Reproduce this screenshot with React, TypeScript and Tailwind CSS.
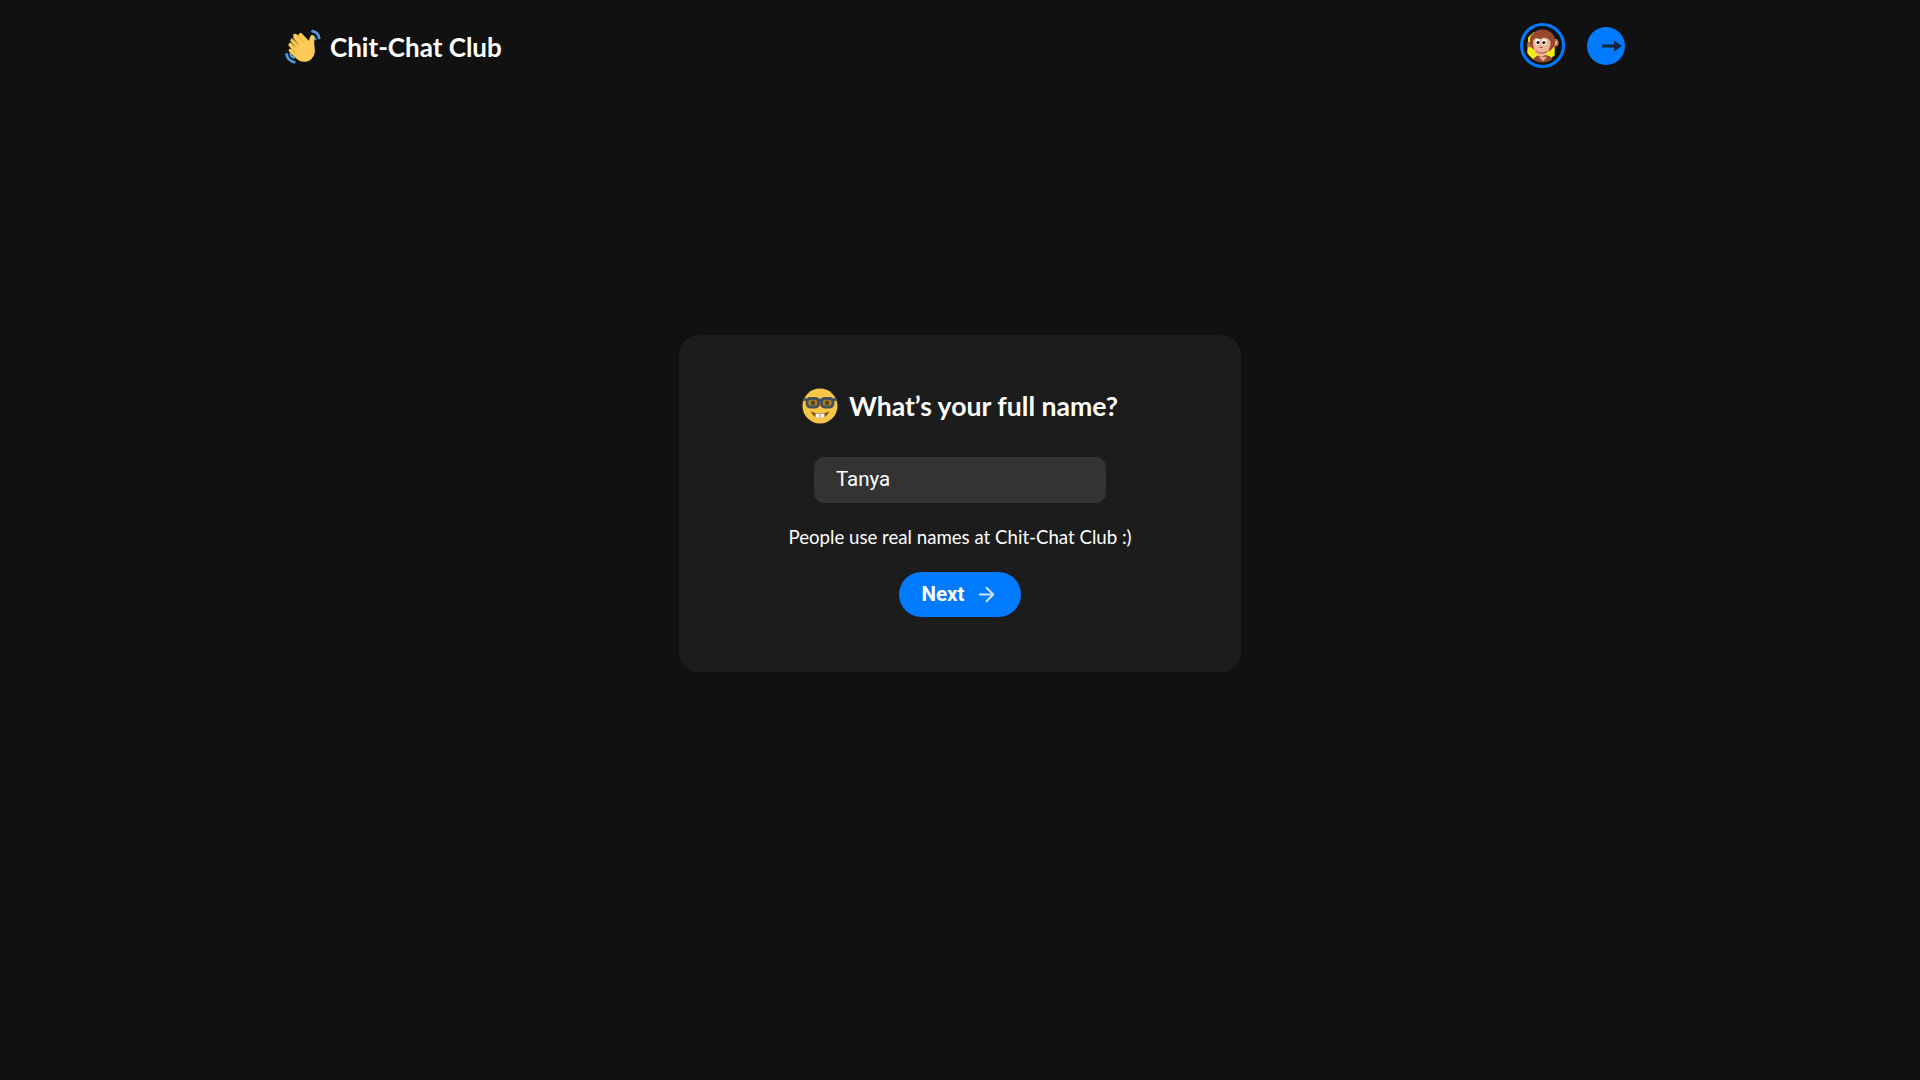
import { ArrowRight } from "lucide-react";

function WaveIcon() {
  return (
    <svg viewBox="0 0 36 36" className="h-[38px] w-[38px] shrink-0">
      <path d="M27 3c3.200.6 5.600 3.100 6.300 6.500" fill="none" stroke="#4F9BD9" strokeWidth="2.600" strokeLinecap="round" />
      <path d="M26.500 7.500c1.600.4 2.700 1.500 3.200 3" fill="none" stroke="#4F9BD9" strokeWidth="2.200" strokeLinecap="round" />
      <path d="M2.500 25c.6 3.600 3.500 6.500 7.200 7.300" fill="none" stroke="#4F9BD9" strokeWidth="2.600" strokeLinecap="round" />
      <path d="M6 24.500c.5 1.800 1.800 3.100 3.500 3.500" fill="none" stroke="#4F9BD9" strokeWidth="2.200" strokeLinecap="round" />
      <path
        d="M8.500 6.500c1-1.300 2.800-1.300 3.800-.2l1.200 1.200c-.3-1.500 1.700-3.600 3.400-2.400l6.800 7.200c.2-2 .6-4.500 2.300-5.300 1.500-.6 2.500.5 2.600 1.800.3 3.500-.3 6.700.4 10 .9 4.200-.3 8-3.300 10.700-3.600 3.200-9.200 3.400-13 .4L5 22.500c-1.500-1.500.4-3.700 2.100-2.500l3.600 3.400-6-6.700c-1.400-1.700.8-3.700 2.400-2.300l5 5-5.600-6.500c-1.400-1.700.9-3.700 2.400-2.300l5.600 5.600-4.700-5.500c-.7-.9-1.500-2.200-.9-3.400z"
        fill="#FDCB58"
      />
      <path d="M12.300 6.300l6.700 7.400M7.100 9.900l6.300 6.800M4.700 16.700l6 6.700" fill="none" stroke="#E9A93A" strokeWidth="0.9" strokeLinecap="round" />
    </svg>
  );
}

function NerdIcon() {
  return (
    <svg viewBox="0 0 36 36" className="h-[36px] w-[36px] shrink-0">
      <circle cx="18" cy="18" r="17.500" fill="#F7C648" />
      <path d="M9 23c2.500 3 15.500 3 18 0-.8 4.300-4.300 7-9 7s-8.200-2.700-9-7z" fill="#7A5A12" />
      <path d="M13.500 25.600h4.200v4.300c-1.600.1-3-.2-4.200-.9zM18.300 25.600h4.200V29c-1.200.7-2.600 1-4.200.9z" fill="#F5F1E6" />
      <rect x="5" y="10.500" width="11.500" height="8.500" rx="3" fill="#A9812C" />
      <rect x="19.500" y="10.500" width="11.500" height="8.500" rx="3" fill="#A9812C" />
      <circle cx="11" cy="14.700" r="2.200" fill="#5A4210" />
      <circle cx="25" cy="14.700" r="2.200" fill="#5A4210" />
      <g fill="none" stroke="#46505A" strokeWidth="2.800">
        <rect x="5" y="10.500" width="11.500" height="8.500" rx="3" />
        <rect x="19.500" y="10.500" width="11.500" height="8.500" rx="3" />
        <path d="M16.500 12h3M5 12L1 11M31 12l4-1" />
      </g>
    </svg>
  );
}

function MonkeyAvatar() {
  return (
    <div className="mb-[4px] h-[45px] w-[45px] shrink-0 rounded-full border-[3px] border-[#007aff] bg-[#111111] p-[2px]">
      <svg viewBox="0 0 33 33" className="h-full w-full">
        <clipPath id="avatar-clip">
          <circle cx="16.500" cy="16.500" r="16" />
        </clipPath>
        <g clipPath="url(#avatar-clip)">
          <rect width="33" height="33" fill="#111111" />
          <path d="M3 9l5-5h16l4 7v15l-6 4H8l-6-6z" fill="#F6EE12" />
          <path d="M7 33c0-5 4-7.500 10-7.500S27 28 27 33z" fill="#8E4A38" />
          <path d="M13 27h8l-4 4.500z" fill="#EFA987" />
          <circle cx="28" cy="14" r="3.800" fill="#B8704F" />
          <circle cx="28" cy="14" r="2.300" fill="#F0B592" />
          <circle cx="5" cy="15.500" r="2.800" fill="#B8704F" />
          <ellipse cx="16.500" cy="12.500" rx="12" ry="11" fill="#96492F" />
          <path d="M7.500 13.500c0-3.500 3-5 5-3.500 1 .9 2 .9 3 0 2.500-2 8-.5 8.500 3.500.5 2-.3 3.500-.8 5-.9 4.500-3.700 8.500-7.700 8.500-4.300 0-7-4-7.300-8.500-.4-1.500-.7-3-.7-5z" fill="#F0B592" />
          <ellipse cx="12" cy="13.200" rx="2.300" ry="3" fill="#FFFFFF" />
          <ellipse cx="18" cy="13.200" rx="2.300" ry="3" fill="#FFFFFF" />
          <circle cx="12.300" cy="13.700" r="1.500" fill="#2A1710" />
          <circle cx="17.800" cy="13.700" r="1.500" fill="#2A1710" />
          <path d="M13.800 18c.8.5 1.700.5 2.600 0" fill="none" stroke="#7A3E2A" strokeWidth="1" />
          <path d="M10 20.500c2.500 3.500 8.500 3.800 11.500.2-1 4.300-10 4.500-11.500-.2z" fill="#8A2F24" />
        </g>
      </svg>
    </div>
  );
}

function ExitIcon() {
  return (
    <div className="mb-[2px] h-[38px] w-[38px] shrink-0 rounded-full bg-[#007aff]">
      <svg viewBox="0 0 38 38" className="h-[38px] w-[38px]">
        <path d="M15 19h15" stroke="#12233a" strokeWidth="3" fill="none" />
        <path d="M27 13.500L35 19l-8 5.500z" fill="#12233a" />
      </svg>
    </div>
  );
}

export default function App() {
  return (
    <div className="min-h-screen bg-[#111111] text-white">
      <header className="mx-auto flex h-[94px] w-[1352px] items-center justify-between pr-[11px]">
        <div className="flex items-center gap-[8px]">
          <WaveIcon />
          <span className="pt-[1px] font-['Lato',sans-serif] text-[26px] font-bold">Chit-Chat Club</span>
        </div>
        <div className="flex items-center gap-[22px]">
          <MonkeyAvatar />
          <ExitIcon />
        </div>
      </header>

      <main className="flex justify-center pt-[241px]">
        <div className="flex h-[337px] w-[562px] flex-col items-center rounded-[20px] bg-[#1c1c1c] pt-[52px]">
          <div className="flex items-center gap-[11px]">
            <NerdIcon />
            <h1 className="pt-[1px] font-['Lato',sans-serif] text-[26.600px] font-bold leading-[36px]">What’s your full name?</h1>
          </div>
          <div className="mt-[33px] flex h-[46px] w-[292px] items-center rounded-[10px] bg-[#333333] px-[22px] pb-[1px] font-['Roboto',sans-serif] text-[20.500px]">
            Tanya
          </div>
          <p className="mt-[22px] font-['Lato',sans-serif] text-[18.650px] leading-[24px]">People use real names at Chit-Chat Club :)</p>
          <button className="mt-[23px] flex h-[45px] w-[122px] items-center justify-center gap-[11px] rounded-full bg-[#007aff] font-['Roboto',sans-serif] text-[20.500px] font-bold">
            Next
            <ArrowRight className="h-[23px] w-[23px] text-[#d0e4ff]" strokeWidth={2} />
          </button>
        </div>
      </main>
    </div>
  );
}
